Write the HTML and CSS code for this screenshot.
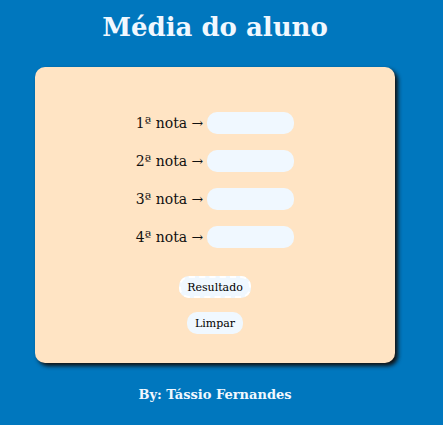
FILE: index.html
```html
<!DOCTYPE html>
<html lang="pt-br">
<head>
<meta charset="utf-8">
<title>Média do aluno</title>
<link rel="stylesheet" href="styles.css">
</head>
<body>
<header class="top">
  <h1 class="title">Média do aluno</h1>
</header>
<main class="card">
  <div class="row"><label class="lbl">1ª nota →</label><input class="field" type="text"></div>
  <div class="row"><label class="lbl">2ª nota →</label><input class="field" type="text"></div>
  <div class="row"><label class="lbl">3ª nota →</label><input class="field" type="text"></div>
  <div class="row"><label class="lbl">4ª nota →</label><input class="field" type="text"></div>
  <div class="btns">
    <button class="btn btn-dashed">Resultado</button>
    <button class="btn">Limpar</button>
  </div>
</main>
<footer class="foot">By: Tássio Fernandes</footer>
</body>
</html>
```
FILE: styles.css
```css
html, body { margin: 0; padding: 0; }
body {
  background: #0077be;
  font-family: "DejaVu Serif", serif;
  width: 430px;
  height: 425px;
  overflow: hidden;
}
.top { display: flex; justify-content: center; padding-top: 8px; }
.title {
  margin: 0;
  color: #f0f8ff;
  font-size: 26px;
  font-weight: bold;
  line-height: 38px;
}
.card {
  margin: 21px auto 0;
  width: 360px;
  height: 296px;
  box-sizing: border-box;
  background: #ffe4c4;
  border-radius: 10px;
  box-shadow: 3px 3px 4px #111;
  display: flex;
  flex-direction: column;
  align-items: center;
  padding-top: 45px;
}
.row {
  display: flex;
  align-items: center;
  gap: 4px;
  height: 22px;
  margin-bottom: 16px;
}
.lbl { font-size: 14px; color: #111; }
.field {
  width: 87px;
  height: 22px;
  box-sizing: border-box;
  border: none;
  border-radius: 10px;
  background: #f0f8ff;
}
.btns {
  display: flex;
  flex-direction: column;
  align-items: center;
  gap: 14px;
  margin-top: 12px;
}
.btn {
  font-family: "DejaVu Serif", serif;
  font-size: 11px;
  background: #f0f8ff;
  border: none;
  border-radius: 10px;
  padding: 3px 8px;
  height: 22px;
  color: #000;
}
.btn-dashed { outline: 2px dashed #fff; outline-offset: -2px; }
.foot {
  text-align: center;
  color: #f0f8ff;
  font-weight: bold;
  font-size: 13px;
  margin-top: 24px;
}
```
